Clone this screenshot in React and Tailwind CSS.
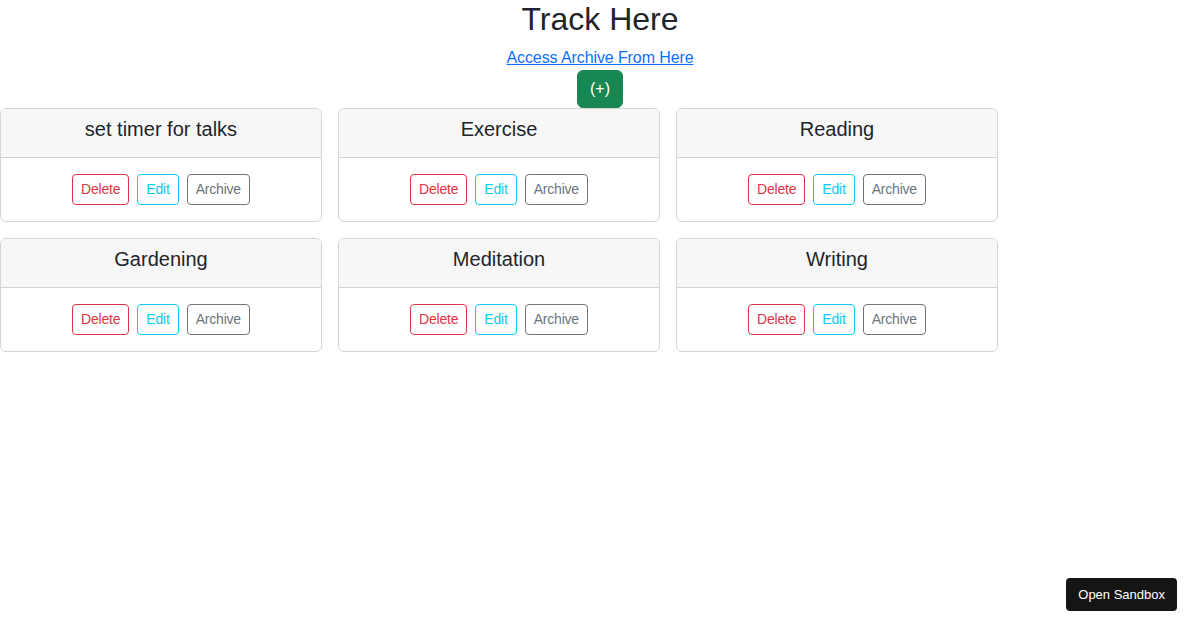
const habits = ["set timer for talks", "Exercise", "Reading", "Gardening", "Meditation", "Writing"];

function HabitCard({ title }) {
  return (
    <div className="flex flex-col rounded-[6px] border border-[#d3d4d5] bg-white">
      <div className="rounded-t-[5px] border-b border-[#d3d4d5] bg-[#f7f7f7] px-4 py-2 text-center">
        <h5 className="mb-2 text-[20px] leading-[24px] text-[#212529]">{title}</h5>
      </div>
      <div className="flex justify-center gap-2 p-4 tracking-[-0.2px]">
        <button className="rounded-[4px] border border-[#dc3545] px-2 py-1 text-[14px] leading-[21px] text-[#dc3545]">
          Delete
        </button>
        <button className="rounded-[4px] border border-[#0dcaf0] px-2 py-1 text-[14px] leading-[21px] text-[#0dcaf0]">
          Edit
        </button>
        <button className="rounded-[4px] border border-[#6c757d] px-2 py-1 text-[14px] leading-[21px] text-[#6c757d]">
          Archive
        </button>
      </div>
    </div>
  );
}

export default function App() {
  return (
    <div className="min-h-[630px] bg-white font-['Liberation_Sans',Arial,sans-serif] text-[#212529]">
      <div className="flex flex-col items-center">
        <h2 className="mb-2 text-[32px] leading-[38.4px]">Track Here</h2>
        <a href="#" className="text-[16px] leading-[24px] tracking-[-0.1px] text-[#0d6efd] underline">
          Access Archive From Here
        </a>
        <button className="rounded-[6px] border border-[#198754] bg-[#198754] px-3 py-[6px] text-[16px] leading-[24px] text-white">
          (+)
        </button>
      </div>

      <div className="grid w-[998px] grid-cols-[322px_322px_322px] gap-4">
        {habits.map((h) => (
          <HabitCard key={h} title={h} />
        ))}
      </div>

      <button className="fixed bottom-[19px] right-[23px] rounded-[4px] bg-[#151515] px-[12px] py-[8px] text-[13px] leading-[17px] text-white">
        Open Sandbox
      </button>
    </div>
  );
}
